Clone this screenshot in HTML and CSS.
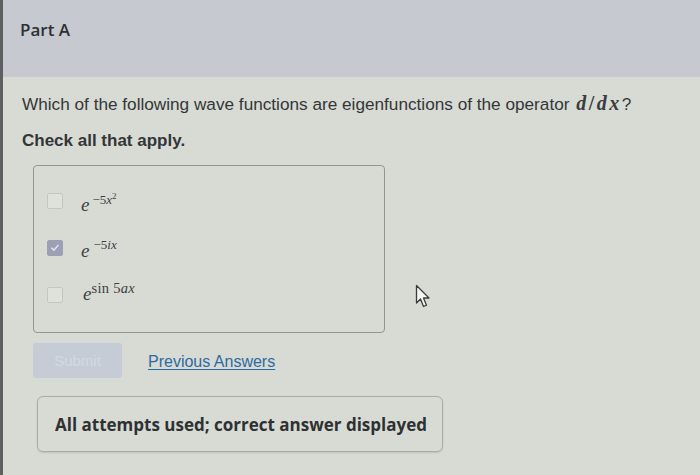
FILE: index.html
```html
<!DOCTYPE html>
<html>
<head>
<meta charset="utf-8">
<link rel="stylesheet" href="styles.css">
</head>
<body>
<div class="screen">
  <div class="edge"></div>
  <div class="content">
    <header class="header">
      <h2 class="part-title">Part A</h2>
    </header>
    <main class="main">
      <p class="question">Which of the following wave functions are eigenfunctions of the operator <span class="math"><i>d</i>/<i>dx</i></span>?</p>
      <p class="instruction">Check all that apply.</p>
      <div class="options">
        <div class="option">
          <span class="checkbox"></span>
          <span class="expr expr-1"><i class="base">e</i><sup class="exp">−5<i>x</i><sup class="sq">2</sup></sup></span>
        </div>
        <div class="option">
          <span class="checkbox checked">
            <svg viewBox="0 0 16 16" width="15" height="15"><path d="M4 8.2 L6.8 11 L12 5" fill="none" stroke="#e6e8f0" stroke-width="1.6"/></svg>
          </span>
          <span class="expr expr-2"><i class="base">e</i><sup class="exp">−5<i>ix</i></sup></span>
        </div>
        <div class="option">
          <span class="checkbox"></span>
          <span class="expr expr-3"><i class="base">e</i><sup class="exp">sin 5<i>ax</i></sup></span>
        </div>
        <svg class="cursor" viewBox="0 0 18 26" width="18" height="26"><path d="M1.5 1.5 L1.5 19 L5.5 15 L8.5 22.5 L11.5 21.2 L8.5 14 L14 14 Z" fill="#f4f5f1" stroke="#3a3d3f" stroke-width="1.3" stroke-linejoin="round"/></svg>
      </div>
      <div class="actions">
        <button class="submit" disabled>Submit</button>
        <a class="prev-link" href="#">Previous Answers</a>
      </div>
      <div class="feedback">All attempts used; correct answer displayed</div>
    </main>
  </div>
</div>
</body>
</html>
```
FILE: styles.css
```css
html, body {
  margin: 0;
  padding: 0;
}
body {
  width: 700px;
  height: 475px;
  overflow: hidden;
  font-family: "Liberation Sans", Arial, sans-serif;
  background: #d8dbd3;
}
.screen {
  display: flex;
  height: 475px;
}
.edge {
  width: 3px;
  background: #5d6060;
  flex: none;
}
.content {
  flex: 1;
  display: flex;
  flex-direction: column;
}
.header {
  height: 77px;
  background: #c6c9d0;
  padding: 19px 0 0 17px;
  box-sizing: border-box;
}
.part-title {
  margin: 0;
  font-family: "Open Sans", "Liberation Sans", sans-serif;
  font-size: 17px;
  font-weight: 600;
  line-height: 22px;
  color: #2e3032;
}
.main {
  flex: 1;
  padding: 14px 0 0 19px;
  background: #d8dbd3;
}
.question {
  margin: 0;
  font-size: 17.2px;
  line-height: 24px;
  color: #333639;
}
.math {
  font-family: "Liberation Serif", "DejaVu Serif", serif;
  font-size: 20px;
  font-weight: bold;
  letter-spacing: 2.5px;
  margin-left: 2px;
  color: #3a3c40;
}
.instruction {
  margin: 13px 0 0 0;
  font-size: 17px;
  font-weight: bold;
  line-height: 24px;
  color: #333639;
}
.options {
  position: relative;
  margin: 12px 0 0 11px;
  width: 350px;
  height: 166px;
  border: 1px solid #8f9694;
  border-radius: 4px;
  display: flex;
  flex-direction: column;
}
.option {
  display: flex;
  align-items: center;
  height: 47px;
  padding-left: 13px;
}
.option:first-child {
  margin-top: 11px;
}
.checkbox {
  width: 14px;
  height: 14px;
  border: 1px solid #c3c6c3;
  border-radius: 2px;
  background: #dfe1db;
  flex: none;
  display: flex;
  align-items: center;
  justify-content: center;
}
.checkbox.checked {
  background: #9ba0b6;
  border-color: #9ba0b6;
}
.expr {
  margin-left: 18px;
  font-family: "Liberation Serif", "DejaVu Serif", serif;
  color: #3d3f44;
  line-height: 20px;
}
.expr-1 {
  padding-top: 9px;
}
.expr-1 .exp {
  vertical-align: 7px;
  margin-left: 3px;
}
.expr-2 {
  padding-top: 7px;
}
.expr-2 .exp {
  vertical-align: 8px;
  margin-left: 4px;
}
.expr-3 {
  margin-left: 20px;
  padding-top: 0;
}
.expr-3 .exp {
  vertical-align: 7px;
  font-size: 14.5px;
  letter-spacing: 0.3px;
}
.base {
  font-size: 19px;
}
.exp {
  font-size: 13px;
  line-height: 0;
}
.sq {
  font-size: 9px;
  vertical-align: 5px;
  line-height: 0;
}
.cursor {
  position: absolute;
  left: 381px;
  top: 118px;
}
.actions {
  display: flex;
  align-items: center;
  margin: 10px 0 0 11px;
  gap: 26px;
}
.submit {
  width: 89px;
  height: 35px;
  border: none;
  border-radius: 3px;
  background: #c5ccd6;
  color: #d3d9e1;
  font-family: "Liberation Sans", Arial, sans-serif;
  font-size: 15px;
  padding: 0;
}
.prev-link {
  font-size: 16px;
  color: #2c6aa3;
  text-decoration: underline;
  text-underline-offset: 2px;
  margin-top: 2px;
}
.feedback {
  margin: 18px 0 0 15px;
  width: 406px;
  height: 56px;
  border: 1px solid #a7acab;
  border-radius: 6px;
  box-shadow: 0 1px 2px rgba(0,0,0,0.12);
  box-sizing: border-box;
  display: flex;
  align-items: center;
  padding-left: 17px;
  font-family: "Open Sans", "DejaVu Sans", sans-serif;
  font-weight: bold;
  font-size: 17px;
  color: #2e3134;
}
```
